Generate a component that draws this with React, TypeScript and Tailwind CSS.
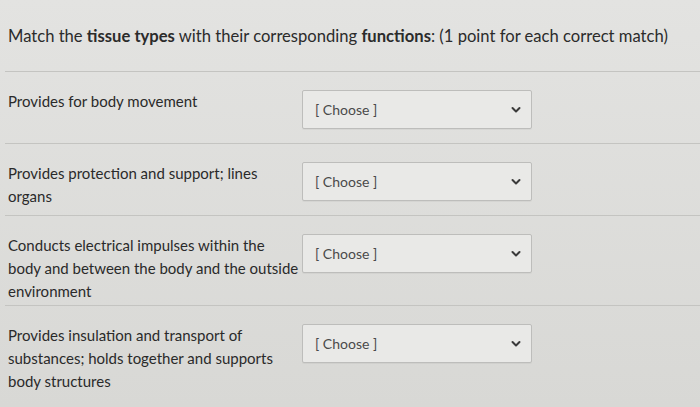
import React from "react";

const rows: string[][] = [
  ["Provides for body movement"],
  ["Provides protection and support; lines", "organs"],
  ["Conducts electrical impulses within the", "body and between the body and the outside", "environment"],
  ["Provides insulation and transport of", "substances; holds together and supports", "body structures"],
];

function Chevron() {
  return (
    <svg width="10" height="8" viewBox="0 0 10 8" className="shrink-0">
      <path d="M1.5 2 L5 5.5 L8.5 2" fill="none" stroke="#3a3a3a" strokeWidth="2" strokeLinecap="round" strokeLinejoin="round" />
    </svg>
  );
}

export default function App() {
  return (
    <div
      className="w-[700px] h-[407px] overflow-hidden bg-gradient-to-b from-[#e3e3e1] to-[#d8d8d5] text-[#2b2b2b]"
      style={{ fontFamily: "Lato, 'Open Sans', sans-serif" }}
    >
      <div className="h-[71px] flex items-center pl-[8px] pt-[2px] text-[16.6px]">
        <span className="whitespace-nowrap">
          Match the <b className="font-bold">tissue types</b> with their corresponding{" "}
          <b className="font-bold">functions</b>: (1 point for each correct match)
        </span>
      </div>
      {rows.map((lines, i) => (
        <div key={i} className="border-t border-[#c4c4c1] ml-[5px] flex pt-[18px] pb-[2px]">
          <div className="w-[297px] pl-[3px] text-[15px] leading-[23px] text-[#2a2a2a]">
            {lines.map((l, j) => (
              <div key={j} className="whitespace-nowrap">{l}</div>
            ))}
          </div>
          <div className="w-[230px] h-[39px] mb-[12px] border border-[#bdbdbb] bg-[#e9e9e7] rounded-[2px] flex items-center justify-between pl-[12px] pr-[10px] shadow-[0_1px_0_rgba(0,0,0,0.04)]">
            <span className="text-[14px] text-[#4a4a4a]">[ Choose ]</span>
            <Chevron />
          </div>
        </div>
      ))}
    </div>
  );
}
